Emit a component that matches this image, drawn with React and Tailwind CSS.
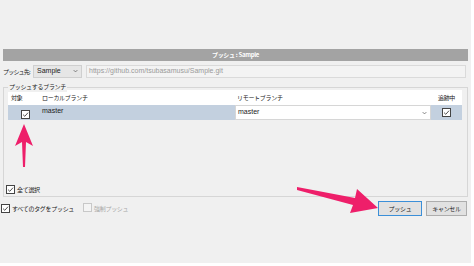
import React from 'react'

const jp = { fontFamily: '"Noto Sans CJK JP", "Noto Sans", sans-serif' }
const latin = { fontFamily: '"Liberation Sans", sans-serif' }

function Check({ checked = true, disabled = false }) {
  return (
    <span
      className={`inline-flex shrink-0 items-center justify-center w-[9px] h-[9px] border ${
        disabled ? 'border-[#c8c8c8] bg-[#f4f4f4]' : 'border-[#444] bg-white'
      }`}
    >
      {checked && (
        <svg viewBox="0 0 10 10" className="w-[7px] h-[7px]">
          <path d="M1.5 5.2 L4 7.6 L8.6 2.4" fill="none" stroke="#333" strokeWidth="1.2" />
        </svg>
      )}
    </span>
  )
}

function Chevron() {
  return (
    <svg viewBox="0 0 8 6" className="w-[5px] h-[4px]">
      <path d="M1 1.5 L4 4.5 L7 1.5" fill="none" stroke="#555" strokeWidth="1.1" />
    </svg>
  )
}

export default function App() {
  return (
    <div className="relative w-[474px] h-[266px] bg-white overflow-hidden tracking-[-0.3px]" style={jp}>
      <div className="w-[471px] h-[263px] bg-[#f0f0f0] flex flex-col">
        <div className="h-[49px]" />

        {/* Title */}
        <div className="mx-[3px] h-[12px] bg-[#a3a3a3] text-white text-[6px] font-semibold leading-[12px] text-center">
          プッシュ : Sample
        </div>

        {/* Destination */}
        <div className="h-[20px] flex items-center pl-[3px] pr-[5px] text-[6px] text-[#222]">
          <span className="w-[30px] shrink-0 whitespace-nowrap tracking-[-0.8px]">プッシュ先:</span>
          <div className="w-[49px] shrink-0 h-[13px] bg-[#e6e6e6] border border-[#cfcfcf] flex items-center justify-between px-[3px]">
            <span className="text-[7px] tracking-normal" style={latin}>Sample</span>
            <Chevron />
          </div>
          <div
            className="ml-[4px] flex-1 h-[13px] bg-[#f3f3f3] border border-[#dadada] flex items-center px-[2px] text-[7px] tracking-normal text-[#9a9a9a]"
            style={latin}
          >
            https://github.com/tsubasamusu/Sample.git
          </div>
        </div>

        {/* Group box */}
        <div className="relative mx-[3px] mt-[6px] h-[110px] border border-[#d6d6d6] flex flex-col">
          <span className="absolute -top-[6px] left-[4px] bg-[#f0f0f0] px-[1px] text-[6px] leading-[10px] text-[#222]">
            プッシュするブランチ
          </span>

          <div className="ml-[4px] mr-[5px] mt-[2px] text-[6px] text-[#222]">
            <div className="h-[15px] bg-white flex items-center">
              <span className="w-[34px] pl-[3px]">対象</span>
              <span className="w-[193px]">ローカルブランチ</span>
              <span className="flex-1 pl-[2px]">リモートブランチ</span>
              <span className="w-[31px] text-center">追跡中</span>
            </div>
            <div className="h-[15px] bg-[#c3d0df] flex items-stretch">
              <span className="w-[34px] flex items-end justify-center pb-[1px]">
                <Check />
              </span>
              <span className="w-[193px] text-[7px] tracking-normal leading-[10px] pt-[1px]" style={latin}>
                master
              </span>
              <div className="flex-1 bg-white border border-[#d6d6d6] flex items-center justify-between pl-[2px] pr-[3px]">
                <span className="text-[7px] tracking-normal" style={latin}>master</span>
                <Chevron />
              </div>
              <span className="w-[31px] flex items-center justify-center">
                <Check />
              </span>
            </div>
          </div>

          <div className="flex-1" />
          <div className="flex items-center gap-[2px] pl-[2px] pb-[2px] text-[6px] text-[#222]">
            <Check />
            <span>全て選択</span>
          </div>
        </div>

        {/* Bottom row */}
        <div className="h-[22px] flex items-center pl-[1px] pr-[4px] text-[6px] text-[#222]">
          <Check />
          <span className="ml-[2px]">すべてのタグをプッシュ</span>
          <span className="ml-[9px]">
            <Check checked={false} disabled />
          </span>
          <span className="ml-[2px] text-[#a8a8a8]">強制プッシュ</span>
          <div className="flex-1" />
          <button className="w-[44px] h-[15px] bg-[#e1e1e1] border border-[#3b8fd8] text-[6px]">プッシュ</button>
          <button className="ml-[4px] w-[41px] h-[15px] bg-[#e1e1e1] border border-[#adadad] text-[6px]">キャンセル</button>
        </div>
        <div className="flex-1" />
      </div>

      {/* Annotation arrows */}
      <svg className="absolute inset-0 pointer-events-none" width="474" height="266" viewBox="0 0 474 266">
        <polygon points="24,124 33,146 26,142 25,167 23,167 22,142 15,146" fill="#ee1f6a" />
        <polygon points="297,187 355,198 357,189 378,208 350,213 353,205 297,190" fill="#ee1f6a" />
      </svg>
    </div>
  )
}
